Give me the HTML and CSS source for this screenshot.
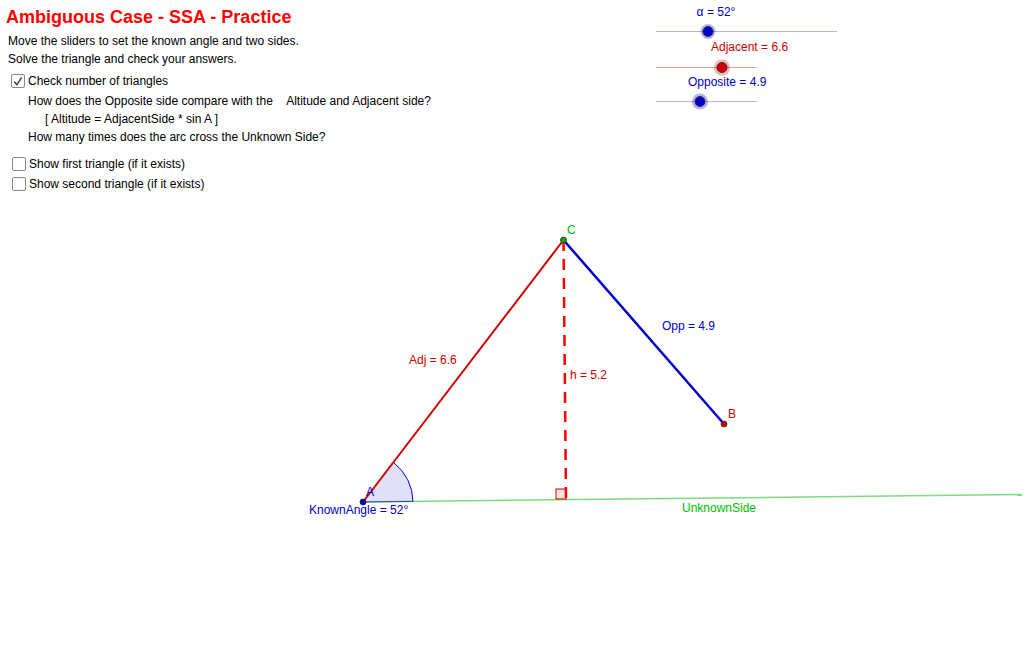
FILE: index.html
```html
<!DOCTYPE html>
<html>
<head>
<meta charset="utf-8">
<link rel="stylesheet" href="styles.css">
</head>
<body>
<div class="applet">
  <div class="panel">
    <h1 class="title">Ambiguous Case - SSA - Practice</h1>
    <p class="line">Move the sliders to set the known angle and two sides.</p>
    <p class="line">Solve the triangle and check your answers.</p>
    <label class="check check-main"><span class="box checked"><svg viewBox="0 0 13 13" width="13" height="13"><path d="M2.5 6.5 L5.3 10 L10.5 2" fill="none" stroke="#444" stroke-width="1.6"/></svg></span>Check number of triangles</label>
    <div class="hints">
      <p class="line">How does the Opposite side compare with the <span class="gap"></span>Altitude and Adjacent side?</p>
      <p class="line indent">[ Altitude = AdjacentSide * sin A ]</p>
      <p class="line">How many times does the arc cross the Unknown Side?</p>
    </div>
    <label class="check check-first"><span class="box"></span>Show first triangle (if it exists)</label>
    <label class="check check-second"><span class="box"></span>Show second triangle (if it exists)</label>
  </div>
  <svg class="canvas" width="1024" height="651" viewBox="0 0 1024 651">
    <!-- sliders -->
    <text x="716" y="16" class="lbl blue" text-anchor="middle">α = 52°</text>
    <line x1="656" y1="31.5" x2="837" y2="31.5" stroke="#b4b4dc" stroke-width="1"/>
    <circle cx="708" cy="31.5" r="7.5" fill="#0000cc" opacity="0.3"/>
    <circle cx="708" cy="31.5" r="5" fill="#0000cc" stroke="#222" stroke-width="0.8"/>

    <text x="711" y="51" class="lbl red">Adjacent = 6.6</text>
    <line x1="656" y1="67.5" x2="757" y2="67.5" stroke="#e0a0a0" stroke-width="1"/>
    <circle cx="722" cy="67.5" r="8" fill="#cc0000" opacity="0.3"/>
    <circle cx="722" cy="67.5" r="5" fill="#cc0000" stroke="#222" stroke-width="0.8"/>

    <text x="688" y="86" class="lbl blue">Opposite = 4.9</text>
    <line x1="656" y1="101.5" x2="757" y2="101.5" stroke="#b4b4dc" stroke-width="1"/>
    <circle cx="700" cy="101.5" r="8" fill="#0000cc" opacity="0.3"/>
    <circle cx="700" cy="101.5" r="5" fill="#0000cc" stroke="#222" stroke-width="0.8"/>

    <!-- unknown side -->
    <line x1="363" y1="502" x2="1022" y2="494.5" stroke="#7ddc7d" stroke-width="1.5"/>
    <!-- angle sector -->
    <path d="M363 502 L413 501.4 A50 50 0 0 0 393.6 462.6 Z" fill="#0000cc" fill-opacity="0.12"/>
    <path d="M413 501.4 A50 50 0 0 0 393.6 462.6" fill="none" stroke="#0000cc" stroke-width="1"/>
    <line x1="363" y1="502" x2="413" y2="501.4" stroke="#4040c0" stroke-width="1"/>
    <!-- right angle -->
    <rect x="556" y="489" width="10" height="10" fill="#ff0000" fill-opacity="0.12" stroke="#cc0000" stroke-width="1"/>
    <!-- altitude -->
    <line x1="563.5" y1="240" x2="566" y2="498" stroke="#ff0000" stroke-width="2.5" stroke-dasharray="11 8"/>
    <!-- sides -->
    <line x1="363" y1="502" x2="563.5" y2="240" stroke="#cc0000" stroke-width="2"/>
    <line x1="563.5" y1="240" x2="724" y2="424" stroke="#0000cc" stroke-width="2.5"/>
    <!-- points -->
    <circle cx="563.5" cy="240" r="3" fill="#00aa00" stroke="#333" stroke-width="0.8"/>
    <circle cx="724" cy="424" r="3" fill="#cc0000" stroke="#333" stroke-width="0.8"/>
    <circle cx="363" cy="502" r="3" fill="#0000cc" stroke="#222" stroke-width="0.8"/>
    <!-- labels -->
    <text x="567" y="234" class="lbl green">C</text>
    <text x="728" y="418" class="lbl red">B</text>
    <text x="366" y="496" class="lbl blue">A</text>
    <text x="309" y="514" class="lbl blue">KnownAngle = 52°</text>
    <text x="682" y="512" class="lbl green">UnknownSide</text>
    <text x="409" y="364" class="lbl red">Adj = 6.6</text>
    <text x="570" y="379" class="lbl red">h = 5.2</text>
    <text x="662" y="330" class="lbl blue">Opp = 4.9</text>
  </svg>
</div>
</body>
</html>
```
FILE: styles.css
```css
html, body {
  margin: 0;
  padding: 0;
  background: #fff;
}
body {
  font-family: "Liberation Sans", Arial, sans-serif;
  color: #000;
}
.applet {
  position: relative;
  width: 1024px;
  height: 651px;
  overflow: hidden;
}
.panel {
  position: relative;
  z-index: 1;
  padding: 6px 0 0 6px;
  display: flex;
  flex-direction: column;
  align-items: flex-start;
}
.title {
  margin: 0 0 4px 0;
  font-size: 18px;
  font-weight: bold;
  color: #ff0000;
  line-height: 22px;
}
.line {
  margin: 0;
  font-size: 12px;
  line-height: 18px;
  padding-left: 2px;
}
.check {
  display: flex;
  align-items: center;
  font-size: 12px;
  line-height: 20px;
  margin-left: 5px;
}
.check-main {
  margin-top: 3px;
}
.check-first {
  margin-top: 7px;
  margin-left: 6px;
}
.check-second {
  margin-left: 6px;
}
.box {
  width: 12px;
  height: 12px;
  border: 1px solid #888;
  border-radius: 2px;
  margin-right: 3px;
  display: flex;
  align-items: center;
  justify-content: center;
  background: #fff;
}
.box svg {
  display: block;
}
.hints {
  padding-top: 1px;
  padding-bottom: 1px;
  padding-left: 20px;
  display: flex;
  flex-direction: column;
}
.indent {
  padding-left: 19px;
}
.gap {
  display: inline-block;
  width: 10px;
}
.canvas {
  position: absolute;
  left: 0;
  top: 0;
}
.lbl {
  font-family: "Liberation Sans", Arial, sans-serif;
  font-size: 12px;
}
.blue { fill: #0000cc; }
.red { fill: #cc0000; }
.green { fill: #00bb00; }
```
